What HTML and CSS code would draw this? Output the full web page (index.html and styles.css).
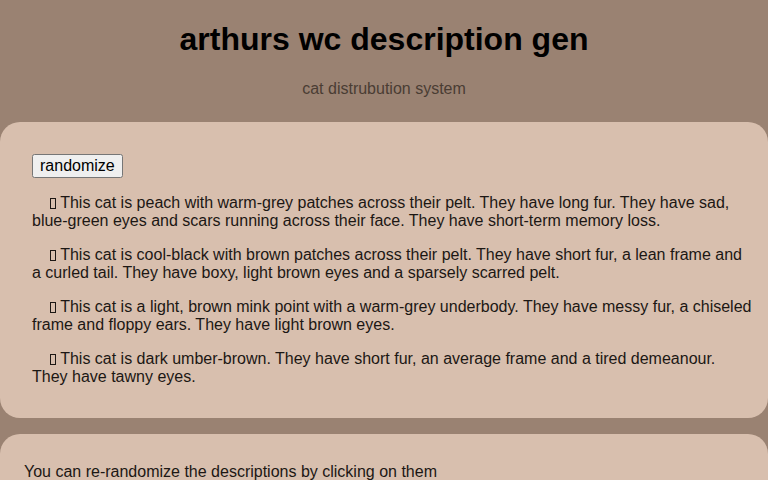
FILE: index.html
```html
<!DOCTYPE html>
<html lang="en">
<head>
    <meta charset="UTF-8">
    <meta name="viewport" content="width=device-width, initial-scale=1.0">
    <title>arthurs wc description gen</title>
    <link rel="stylesheet" href="styles.css">
</head>
<body>
    <div class="header">
        <h1>arthurs wc description gen</h1>
        <p class="subtitle">cat distrubution system</p>
    </div>

    <div class="card">
        <p><button class="randomize-btn">randomize</button></p>
        <div id="cats">
            <p class="cat"><span class="glyph"></span> This cat is peach with warm-grey patches across their pelt. They have long fur. They have sad, blue-green eyes and scars running across their face. They have short-term memory loss.</p>
            <p class="cat"><span class="glyph"></span> This cat is cool-black with brown patches across their pelt. They have short fur, a lean frame and a curled tail. They have boxy, light brown eyes and a sparsely scarred pelt.</p>
            <p class="cat"><span class="glyph"></span> This cat is a light, brown mink point with a warm-grey underbody. They have messy fur, a chiseled frame and floppy ears. They have light brown eyes.</p>
            <p class="cat"><span class="glyph"></span> This cat is dark umber-brown. They have short fur, an average frame and a tired demeanour. They have tawny eyes.</p>
        </div>
    </div>

    <div class="card info">
        <p>You can re-randomize the descriptions by clicking on them</p>
    </div>
</body>
</html>
```

FILE: styles.css
```css
body {
    margin: 0;
    background-color: #9a8272;
    color: #1c1714;
    font-family: 'Liberation Sans', Arial, sans-serif;
}
.header {
    text-align: center;
    margin-bottom: 24px;
}
h1 {
    font-size: 32px;
    color: #000;
    margin: 21px 0 22px;
}
.subtitle {
    color: #4a3d34;
    margin: 0;
}
.card {
    background-color: #d8bfae;
    border-radius: 20px;
    padding: 16px 16px 16px 32px;
    margin-bottom: 16px;
}
.card p {
    font-size: 16px;
    margin: 16px 0;
}
.cat {
    text-indent: 18px;
    cursor: pointer;
}
/* placeholder box where the cat symbol goes */
.glyph {
    display: inline-block;
    width: 4px;
    height: 9px;
    border: 1px solid #1c1714;
    vertical-align: -1px;
}
.randomize-btn {
    font-family: 'Liberation Sans', Arial, sans-serif;
    font-size: 16px;
    padding: 1px 6px;
}
.info {
    padding: 13px 24px;
}
```
